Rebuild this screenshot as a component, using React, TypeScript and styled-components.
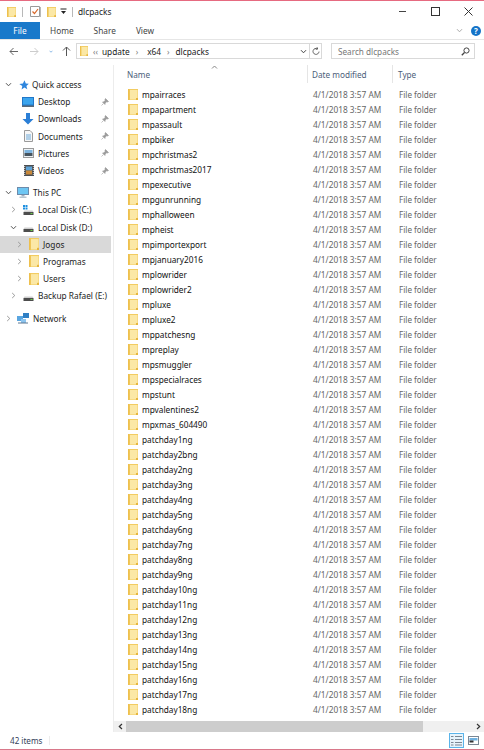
import React from "react";
import styled, { createGlobalStyle } from "styled-components";

const Global = createGlobalStyle`
  html, body { margin: 0; padding: 0; background: #fff; }
  body { font-family: "Noto Sans", "Open Sans", "Liberation Sans", sans-serif; font-size: 8.3px; color: #1c1c1c; }
`;

const Win = styled.div`
  width: 484px; height: 750px; display: flex; flex-direction: column; overflow: hidden;
  border-top: 1px solid #e66a80; border-bottom: 1px solid #d9788a; box-sizing: border-box; background: #fff;
`;
const TitleBar = styled.div`
  height: 21px; flex: none; display: flex; align-items: center; padding-left: 7px;
`;
const QuickGroup = styled.div`display: flex; align-items: center;`;
const TitleSep = styled.span<{ $l: number; $r: number }>`
  width: 1px; height: 10px; background: #b8b8b8; margin-left: ${p => p.$l}px; margin-right: ${p => p.$r}px;
`;
const TitleText = styled.span`font-size: 8.3px; color: #222;`;
const WinButtons = styled.div`margin-left: auto; display: flex; align-items: center; padding-right: 11px; gap: 24px;`;
const Tabs = styled.div`
  height: 17px; flex: none; display: flex; align-items: stretch; border-bottom: 1px solid #e6e6e6; box-sizing: content-box;
`;
const FileTab = styled.div`
  width: 40px; background: #1979ca; color: #fff; display: flex; align-items: center; justify-content: center; font-size: 8.3px;
`;
const Tab = styled.div<{ $ml: number }>`
  margin-left: ${p => p.$ml}px; display: flex; align-items: center; color: #444; font-size: 8.3px;
`;
const RibbonRight = styled.div`margin-left: auto; display: flex; align-items: center; gap: 8px; padding-right: 3px;`;
const HelpBadge = styled.span`
  width: 10px; height: 10px; border-radius: 50%; background: #1473c8; color: #fff; font-size: 8px; font-weight: 700;
  display: flex; align-items: center; justify-content: center; line-height: 1;
`;
const Nav = styled.div`
  height: 25px; flex: none; display: flex; align-items: center; padding-left: 8px; padding-bottom: 3px; box-sizing: border-box;
`;
const NavIcon = styled.span<{ $w: number; $ml?: number }>`
  width: ${p => p.$w}px; margin-left: ${p => p.$ml ?? 0}px; display: flex; justify-content: center;
`;
const Address = styled.div`
  width: 234px; height: 16px; box-sizing: border-box; border: 1px solid #d9d9d9; display: flex; align-items: center; padding-left: 3px; font-size: 8.3px; color: #222;
`;
const Crumb = styled.span<{ $ml: number }>`margin-left: ${p => p.$ml}px;`;
const Gray = styled.span<{ $ml: number }>`margin-left: ${p => p.$ml}px; color: #777; font-size: 8px;`;
const AddrEnd = styled.span`margin-left: auto; display: flex; padding-right: 2px;`;
const Refresh = styled.div`
  width: 12px; height: 16px; box-sizing: border-box; border: 1px solid #d9d9d9; border-left: none; display: flex; align-items: center; justify-content: center;
`;
const Search = styled.div`
  margin-left: 9px; width: 144px; height: 16px; box-sizing: border-box; border: 1px solid #d9d9d9; display: flex; align-items: center; justify-content: space-between; padding: 0 4px 0 6px; color: #777; font-size: 8.2px;
`;
const Body = styled.div`flex: 1; min-height: 0; display: flex;`;
const Sidebar = styled.div`
  width: 113px; flex: none; box-sizing: content-box; border-right: 1px solid #ececec; padding-top: 11px;
`;
const TreeRow = styled.div<{ $indent: number; $sel?: boolean; $top?: number }>`
  height: 17.2px; display: flex; align-items: center; padding-left: ${p => p.$indent}px; margin-right: 2px;
  margin-top: ${p => p.$top ?? 0}px; background: ${p => (p.$sel ? "#d9d9d9" : "transparent")}; color: #1c1c1c; font-size: 8.3px;
`;
const Twisty = styled.span`width: 9px; display: flex; justify-content: center; flex: none;`;
const TreeIcon = styled.span<{ $ml: number; $mr: number }>`display: flex; flex: none; margin-left: ${p => p.$ml}px; margin-right: ${p => p.$mr}px;`;
const Pin = styled.span`margin-left: auto; margin-right: 2px; display: flex;`;
const Main = styled.div`flex: 1; min-width: 0; display: flex; flex-direction: column; position: relative;`;
const Header = styled.div`
  height: 18px; flex: none; display: flex; align-items: center; color: #4c607a; font-size: 8.2px; margin-bottom: 4px;
`;
const HeadCell = styled.div<{ $w: number; $pl: number; $sep?: boolean }>`
  width: ${p => p.$w}px; box-sizing: border-box; padding-left: ${p => p.$pl}px; height: 100%; display: flex; align-items: center;
  border-right: ${p => (p.$sep ? "1px solid #e5e5e5" : "none")};
`;
const SortArrow = styled.span`position: absolute; left: 97px; top: 0; display: flex;`;
const List = styled.div`flex: 1; min-height: 0;`;
const Row = styled.div`height: 15px; display: flex; align-items: center;`;
const NameCell = styled.div`
  width: 194px; box-sizing: border-box; padding-left: 14px; display: flex; align-items: center; gap: 4px; color: #111; font-size: 8.25px;
`;
const DateCell = styled.div`width: 85px; box-sizing: border-box; padding-left: 5px; color: #666; font-size: 8.3px;`;
const TypeCell = styled.div`padding-left: 6px; color: #666; font-size: 8.1px;`;
const HScroll = styled.div`
  height: 11px; flex: none; display: flex; background: #f0f0f0; align-items: stretch;
`;
const ScrollBtn = styled.div`width: 12px; flex: none; display: flex; align-items: center; justify-content: center;`;
const Thumb = styled.div`width: 297px; flex: none; background: #cdcdcd;`;
const Track = styled.div`flex: 1;`;
const Status = styled.div`
  height: 17px; flex: none; display: flex; align-items: center; padding-left: 10px; font-size: 8.1px; color: #33415a;
`;
const StatusSep = styled.span`width: 1px; height: 9px; background: #ececec; margin-left: 7px;`;
const ViewBtns = styled.div`margin-left: auto; display: flex; align-items: center; padding-right: 3px; gap: 2px;`;
const ViewBtn = styled.div<{ $on?: boolean }>`
  width: 15px; height: 15px; box-sizing: border-box; display: flex; align-items: center; justify-content: center;
  border: 1px solid ${p => (p.$on ? "#5ab4ea" : "transparent")}; background: ${p => (p.$on ? "#e6f3fb" : "transparent")};
`;

const Folder = ({ w = 10, h = 11 }: { w?: number; h?: number }) => (
  <svg width={w} height={h} viewBox="0 0 10 11" preserveAspectRatio="none">
    <rect x="0" y="0" width="2" height="11" fill="#eec04e" />
    <rect x="1.5" y="0" width="8.5" height="11" fill="#f2cc62" />
    <rect x="2" y="1" width="7.5" height="9.5" fill="#fbe8a6" />
    <rect x="8" y="9" width="2" height="2" fill="#e6b63e" />
  </svg>
);
const Chev = ({ open, c = "#555" }: { open?: boolean; c?: string }) => (
  <svg width="7" height="7" viewBox="0 0 7 7" fill="none" stroke={c} strokeWidth="1">
    {open ? <path d="M1 2.2 3.5 4.8 6 2.2" /> : <path d="M2.2 1 4.8 3.5 2.2 6" />}
  </svg>
);
const PinIcon = () => (
  <svg width="8" height="8" viewBox="0 0 8 8"><path d="M4.5 0.5 7.5 3.5 6.5 4 5.5 3.8 4.2 5.2 4 6.5 1.5 4 2.8 3.8 4.2 2.5 4 1.2Z M2.5 5.5 0.5 7.5" fill="#9a9a9a" stroke="#9a9a9a" strokeWidth="0.6" /></svg>
);
const Drive = ({ win }: { win?: boolean }) => (
  <svg width="11" height="10" viewBox="0 0 11 10">
    {win && <path d="M0 0h2v2H0zM2.5 0h2v2h-2zM0 2.5h2v2H0zM2.5 2.5h2v2h-2z" fill="#1d8fe0" />}
    <path d="M1.5 5.5h8l1 1.5H.5z" fill="#cfcfcf" />
    <rect x="0.5" y="7" width="10" height="3" fill="#4d4d4d" />
    <rect x="7.5" y="8" width="2" height="1" fill="#6bd04a" />
  </svg>
);
const Star = () => (
  <svg width="10" height="10" viewBox="0 0 10 10"><path d="M5.5.3 6.8 3.6 9.8 3.8 7.4 5.9 8.3 9.2 5.4 7.4 2.6 9.6 3.3 6 .3 4 3.9 3.6Z" fill="#2e86de" /></svg>
);
const DesktopIcon = () => (
  <svg width="12" height="10" viewBox="0 0 12 10"><rect width="12" height="9" fill="#2077c9" /><rect x="1" y="1" width="10" height="6.5" fill="#3ba5ee" /><rect x="0" y="8.5" width="12" height="1.5" fill="#5a6a78" /></svg>
);
const DownloadIcon = () => (
  <svg width="12" height="12" viewBox="0 0 12 12"><path d="M4 0h4v6h3.5L6 11.5.5 6H4z" fill="#2b7fd6" /></svg>
);
const DocIcon = () => (
  <svg width="9" height="12" viewBox="0 0 9 12"><path d="M.5.5h5.5l2.5 2.5v8.5h-8z" fill="#f6f6f6" stroke="#9a9a9a" /><path d="M2 5h5M2 7h5M2 9h5" stroke="#6ca9d8" /></svg>
);
const PicIcon = () => (
  <svg width="11" height="10" viewBox="0 0 11 10"><rect x=".5" y=".5" width="10" height="9" fill="#eef2f5" stroke="#9a9a9a" /><rect x="1.5" y="2" width="8" height="3" fill="#7db4df" /><rect x="1.5" y="5" width="8" height="3" fill="#46545f" /></svg>
);
const VideoIcon = () => (
  <svg width="10" height="11" viewBox="0 0 10 11"><rect width="10" height="11" fill="#4c4f52" /><rect x="2" y="1.5" width="6" height="4" fill="#5fa4d8" /><rect x="2" y="5.5" width="6" height="4" fill="#c9893a" /><path d="M.7 1v9M9.3 1v9" stroke="#ddd" strokeDasharray="1 1" /></svg>
);
const PCIcon = () => (
  <svg width="12" height="11" viewBox="0 0 12 11"><rect width="12" height="8" fill="#6d8bab" /><rect x="1" y="1" width="10" height="6" fill="#6ec6f3" /><rect x="4.5" y="8" width="3" height="1.5" fill="#9fb0bf" /><rect x="2.5" y="9.5" width="7" height="1.5" fill="#b9c6d1" /></svg>
);
const NetIcon = () => (
  <svg width="12" height="11" viewBox="0 0 12 11"><rect x="6" y="0" width="6" height="5" fill="#2f7fc4" /><rect x="0" y="3" width="6" height="5" fill="#5aa6e0" /><rect x="4" y="6" width="5" height="4" fill="#8cc4ee" /><path d="M1 10h10" stroke="#5c7690" /></svg>
);

const names = [
  "mpairraces", "mpapartment", "mpassault", "mpbiker", "mpchristmas2", "mpchristmas2017", "mpexecutive", "mpgunrunning",
  "mphalloween", "mpheist", "mpimportexport", "mpjanuary2016", "mplowrider", "mplowrider2", "mpluxe", "mpluxe2",
  "mppatchesng", "mpreplay", "mpsmuggler", "mpspecialraces", "mpstunt", "mpvalentines2", "mpxmas_604490", "patchday1ng",
  "patchday2bng", "patchday2ng", "patchday3ng", "patchday4ng", "patchday5ng", "patchday6ng", "patchday7ng", "patchday8ng",
  "patchday9ng", "patchday10ng", "patchday11ng", "patchday12ng", "patchday13ng", "patchday14ng", "patchday15ng",
  "patchday16ng", "patchday17ng", "patchday18ng",
];

export default function App() {
  return (
    <Win>
      <Global />
      <TitleBar>
        <QuickGroup>
          <Folder w={9} h={10} />
          <TitleSep $l={6} $r={7} />
          <svg width="10" height="11" viewBox="0 0 10 11"><path d="M.5.5h9v10h-9z" fill="#fff" stroke="#9a9a9a" /><path d="M2.5 5.5 4.5 7.5 8 3" fill="none" stroke="#d9682a" strokeWidth="1.2" /></svg>
          <TitleSep $l={0} $r={6} />
          <Folder w={9} h={10} />
          <svg style={{ marginLeft: 4 }} width="7" height="7" viewBox="0 0 7 7"><path d="M.5 1h6" stroke="#222" /><path d="M1 3h5L3.5 6z" fill="#222" /></svg>
          <TitleSep $l={5} $r={5} />
          <TitleText>dlcpacks</TitleText>
        </QuickGroup>
        <WinButtons>
          <svg width="9" height="9" viewBox="0 0 9 9"><path d="M1 4.5h7" stroke="#444" /></svg>
          <svg width="9" height="9" viewBox="0 0 9 9"><rect x=".5" y=".5" width="8" height="8" fill="none" stroke="#333" /></svg>
          <svg width="9" height="9" viewBox="0 0 9 9"><path d="M.5.5l8 8M8.5.5l-8 8" stroke="#333" /></svg>
        </WinButtons>
      </TitleBar>
      <Tabs>
        <FileTab>File</FileTab>
        <Tab $ml={10}>Home</Tab>
        <Tab $ml={20}>Share</Tab>
        <Tab $ml={20}>View</Tab>
        <RibbonRight>
          <Chev open c="#aaa" />
          <HelpBadge>?</HelpBadge>
        </RibbonRight>
      </Tabs>
      <Nav>
        <NavIcon $w={11}><svg width="10" height="9" viewBox="0 0 10 9" fill="none" stroke="#666" strokeWidth="1"><path d="M9 4.5H1M4.5 1 1 4.5 4.5 8" /></svg></NavIcon>
        <NavIcon $w={30}><svg width="10" height="9" viewBox="0 0 10 9" fill="none" stroke="#ccc" strokeWidth="1"><path d="M1 4.5h8M5.5 1 9 4.5 5.5 8" /></svg></NavIcon>
        <NavIcon $w={4}><Chev open c="#3d8bd6" /></NavIcon>
        <NavIcon $w={20} $ml={3}><svg width="9" height="10" viewBox="0 0 9 10" fill="none" stroke="#555" strokeWidth="1"><path d="M4.5 10V1M1 4.5 4.5 1 8 4.5" /></svg></NavIcon>
        <Address>
          <Folder w={8} h={10} />
          <Gray $ml={5}>‹‹</Gray>
          <Crumb $ml={4}>update</Crumb>
          <Gray $ml={6}>›</Gray>
          <Crumb $ml={9}>x64</Crumb>
          <Gray $ml={6}>›</Gray>
          <Crumb $ml={6}>dlcpacks</Crumb>
          <AddrEnd><Chev open c="#444" /></AddrEnd>
        </Address>
        <Refresh><svg width="8" height="9" viewBox="0 0 8 9" fill="none" stroke="#555" strokeWidth="0.9"><path d="M5.5 1.8A3 3 0 1 0 7 4.6M5 .2 5.7 2 3.8 2.4" /></svg></Refresh>
        <Search>
          Search dlcpacks
          <svg width="9" height="9" viewBox="0 0 9 9" fill="none" stroke="#444" strokeWidth="1"><circle cx="5.5" cy="3.5" r="2.6" /><path d="M3.5 5.5.8 8.2" strokeWidth="1.3" /></svg>
        </Search>
      </Nav>
      <Body>
        <Sidebar>
          <TreeRow $indent={4}>
            <Twisty><Chev open /></Twisty>
            <TreeIcon $ml={6} $mr={3}><Star /></TreeIcon>Quick access
          </TreeRow>
          <TreeRow $indent={22}><TreeIcon $ml={0} $mr={4}><DesktopIcon /></TreeIcon>Desktop<Pin><PinIcon /></Pin></TreeRow>
          <TreeRow $indent={22}><TreeIcon $ml={0} $mr={4}><DownloadIcon /></TreeIcon>Downloads<Pin><PinIcon /></Pin></TreeRow>
          <TreeRow $indent={24}><TreeIcon $ml={0} $mr={5}><DocIcon /></TreeIcon>Documents<Pin><PinIcon /></Pin></TreeRow>
          <TreeRow $indent={23}><TreeIcon $ml={0} $mr={4}><PicIcon /></TreeIcon>Pictures<Pin><PinIcon /></Pin></TreeRow>
          <TreeRow $indent={24}><TreeIcon $ml={0} $mr={4}><VideoIcon /></TreeIcon>Videos<Pin><PinIcon /></Pin></TreeRow>
          <TreeRow $indent={4} $top={5}>
            <Twisty><Chev open /></Twisty>
            <TreeIcon $ml={4} $mr={4}><PCIcon /></TreeIcon>This PC
          </TreeRow>
          <TreeRow $indent={9}><Twisty><Chev c="#999" /></Twisty><TreeIcon $ml={5} $mr={4}><Drive win /></TreeIcon>Local Disk (C:)</TreeRow>
          <TreeRow $indent={9}><Twisty><Chev open /></Twisty><TreeIcon $ml={5} $mr={4}><Drive /></TreeIcon>Local Disk (D:)</TreeRow>
          <TreeRow $indent={15} $sel><Twisty><Chev c="#999" /></Twisty><TreeIcon $ml={5} $mr={4}><Folder h={12} /></TreeIcon>Jogos</TreeRow>
          <TreeRow $indent={15}><Twisty><Chev c="#999" /></Twisty><TreeIcon $ml={5} $mr={4}><Folder h={12} /></TreeIcon>Programas</TreeRow>
          <TreeRow $indent={15}><Twisty><Chev c="#999" /></Twisty><TreeIcon $ml={5} $mr={4}><Folder h={12} /></TreeIcon>Users</TreeRow>
          <TreeRow $indent={9}><Twisty><Chev c="#999" /></Twisty><TreeIcon $ml={5} $mr={4}><Drive /></TreeIcon>Backup Rafael (E:)</TreeRow>
          <TreeRow $indent={4} $top={5}>
            <Twisty><Chev c="#999" /></Twisty>
            <TreeIcon $ml={4} $mr={4}><NetIcon /></TreeIcon>Network
          </TreeRow>
        </Sidebar>
        <Main>
          <SortArrow><svg width="7" height="5" viewBox="0 0 7 5" fill="none" stroke="#888"><path d="M1 3.5 3.5 1 6 3.5" /></svg></SortArrow>
          <Header>
            <HeadCell $w={194} $pl={13} $sep>Name</HeadCell>
            <HeadCell $w={85} $pl={4} $sep>Date modified</HeadCell>
            <HeadCell $w={80} $pl={5}>Type</HeadCell>
          </Header>
          <List>
            {names.map(n => (
              <Row key={n}>
                <NameCell><Folder />{n}</NameCell>
                <DateCell>4/1/2018 3:57 AM</DateCell>
                <TypeCell>File folder</TypeCell>
              </Row>
            ))}
          </List>
          <HScroll>
            <ScrollBtn><svg width="5" height="7" viewBox="0 0 5 7" fill="none" stroke="#333" strokeWidth="1.2"><path d="M4 1 1.3 3.5 4 6" /></svg></ScrollBtn>
            <Thumb />
            <Track />
            <ScrollBtn><svg width="5" height="7" viewBox="0 0 5 7" fill="none" stroke="#333" strokeWidth="1.2"><path d="M1 1 3.7 3.5 1 6" /></svg></ScrollBtn>
          </HScroll>
        </Main>
      </Body>
      <Status>
        42 items<StatusSep />
        <ViewBtns>
          <ViewBtn $on>
            <svg width="11" height="11" viewBox="0 0 11 11" fill="none" stroke="#7a8794"><path d="M0 1.5h2.5M4 1.5h7M0 4.5h2.5M4 4.5h7M0 7.5h2.5M4 7.5h7M0 10h2.5M4 10h7" /></svg>
          </ViewBtn>
          <ViewBtn>
            <svg width="11" height="9" viewBox="0 0 11 9"><rect x=".5" y=".5" width="10" height="8" fill="#fff" stroke="#7a8794" /><rect x="1.5" y="2" width="8" height="2.5" fill="#6fb1e0" /><rect x="1.5" y="4.5" width="4" height="2" fill="#333" /></svg>
          </ViewBtn>
        </ViewBtns>
      </Status>
    </Win>
  );
}
